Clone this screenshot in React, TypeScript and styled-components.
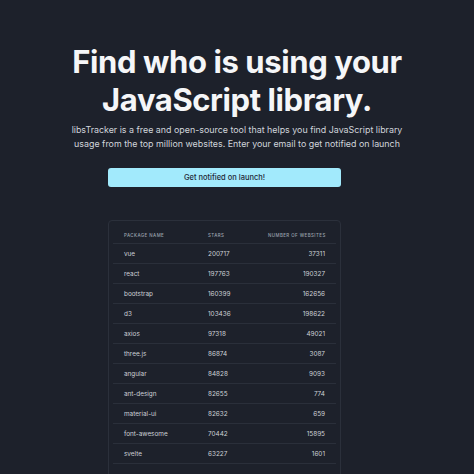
import React from 'react';
import styled, { createGlobalStyle } from 'styled-components';

const GlobalStyle = createGlobalStyle`
	html, body {
		margin: 0;
		padding: 0;
		background: #1d212b;
	}
	body {
		font-family: Inter, 'Noto Sans', sans-serif;
		color: #f3f4f6;
	}
`;

const packages = [
	{ name: 'vue', stars: 200717, sites: 37311 },
	{ name: 'react', stars: 197763, sites: 190327 },
	{ name: 'bootstrap', stars: 160399, sites: 162656 },
	{ name: 'd3', stars: 103436, sites: 198622 },
	{ name: 'axios', stars: 97318, sites: 49021 },
	{ name: 'three.js', stars: 86874, sites: 3087 },
	{ name: 'angular', stars: 84828, sites: 9093 },
	{ name: 'ant-design', stars: 82655, sites: 774 },
	{ name: 'material-ui', stars: 82632, sites: 659 },
	{ name: 'font-awesome', stars: 70442, sites: 15895 },
	{ name: 'svelte', stars: 63227, sites: 1601 },
];

const Page = styled.main`
	display: flex;
	flex-direction: column;
	align-items: center;
	padding-top: 43px;
	min-height: 474px;
	box-sizing: border-box;
`;

const Title = styled.h1`
	margin: 0;
	font-size: 31px;
	line-height: 38px;
	font-weight: 700;
	letter-spacing: -0.4px;
	text-align: center;
	color: #f5f6f8;
`;

const Lead = styled.p`
	margin: 4px 0 0;
	font-size: 8.9px;
	line-height: 14px;
	color: #d1d5db;
	text-align: center;
	width: 340px;
`;

// the button and the table sit a little left of the centred heading
const Column = styled.div`
	display: flex;
	flex-direction: column;
	width: 233px;
	margin-right: 25px;
`;

const NotifyButton = styled.button`
	margin-top: 17px;
	height: 19px;
	border: none;
	border-radius: 3px;
	background: #a2eafc;
	color: #1f2937;
	font-family: inherit;
	font-size: 7.5px;
	font-weight: 500;
	cursor: pointer;
`;

const Card = styled.section`
	margin-top: 33px;
	border: 1px solid #2b303b;
	border-radius: 4px;
	padding: 0 4px 16px;
`;

const Table = styled.table`
	width: 100%;
	border-collapse: collapse;
	table-layout: fixed;
`;

const HeadCell = styled.th<{ $align?: 'left' | 'right'; $width?: number }>`
	box-sizing: border-box;
	width: ${(p) => (p.$width ? `${p.$width}px` : 'auto')};
	text-align: ${(p) => p.$align ?? 'left'};
	font-size: 4.4px;
	line-height: 7px;
	font-weight: 500;
	letter-spacing: 0.45px;
	text-transform: uppercase;
	color: #9ca3af;
	padding: 11px 11px 4px;
	border-bottom: 1px solid #2a2f3a;
	white-space: nowrap;
`;

const Cell = styled.td<{ $align?: 'left' | 'right' }>`
	text-align: ${(p) => p.$align ?? 'left'};
	font-size: 6.4px;
	color: #cdd1d7;
	height: 19px;
	padding: 0 11px;
	border-bottom: 1px solid #2a2f3a;
`;

export default function App() {
	return (
		<>
			<GlobalStyle />
			<Page>
				<Title>
					Find who is using your
					<br />
					JavaScript library.
				</Title>
				<Lead>
					libsTracker is a free and open-source tool that helps you find JavaScript library usage from the top
					million websites. Enter your email to get notified on launch
				</Lead>
				<Column>
					<NotifyButton>Get notified on launch!</NotifyButton>
					<Card>
						<Table>
							<thead>
								<tr>
									<HeadCell $width={84}>Package name</HeadCell>
									<HeadCell $width={60}>Stars</HeadCell>
									<HeadCell $align="right">Number of websites</HeadCell>
								</tr>
							</thead>
							<tbody>
								{packages.map((pkg) => (
									<tr key={pkg.name}>
										<Cell>{pkg.name}</Cell>
										<Cell>{pkg.stars}</Cell>
										<Cell $align="right">{pkg.sites}</Cell>
									</tr>
								))}
							</tbody>
						</Table>
					</Card>
				</Column>
			</Page>
		</>
	);
}
